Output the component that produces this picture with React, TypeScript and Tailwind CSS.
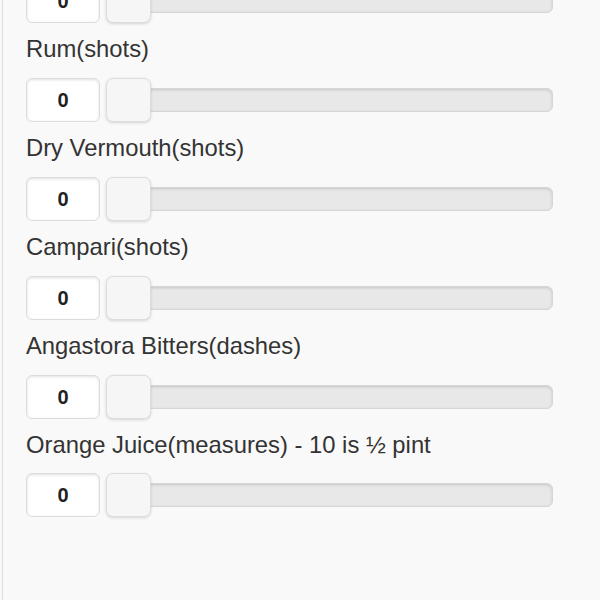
const rows = [
  { label: null },
  { label: 'Rum(shots)' },
  { label: 'Dry Vermouth(shots)' },
  { label: 'Campari(shots)' },
  { label: 'Angastora Bitters(dashes)' },
  { label: 'Orange Juice(measures) - 10 is ½ pint' },
]

function SliderRow() {
  return (
    <div className="flex items-center h-[44px]">
      <div className="w-[74px] h-[44px] rounded-[6px] border border-[#dcdcdc] bg-white shadow-[inset_0_1px_3px_rgba(0,0,0,0.12)] flex items-center justify-center text-[20px] font-bold text-[#222]">
        0
      </div>
      <div className="relative flex-1 h-[44px] ml-[6px] mr-[47px]">
        <div className="ml-[22px] mt-[10px] h-[24px] rounded-[6px] border border-[#d6d6d6] bg-[#e8e8e8] shadow-[inset_0_1px_3px_rgba(0,0,0,0.15)]" />
        <div className="absolute left-0 top-0 w-[45px] h-[44px] rounded-[7px] border border-[#dddddd] bg-[#f6f6f6] shadow-[0_1px_3px_rgba(0,0,0,0.15)]" />
      </div>
    </div>
  )
}

export default function App() {
  return (
    <div className="w-[600px] h-[600px] overflow-hidden bg-[#f9f9f9] pl-[2px] font-['Liberation_Sans',Arial,sans-serif] text-[#333]">
      <div className="h-[640px] border-l border-[#dddddd] pl-[23px] -mt-[21px]">
        {rows.map((r, i) => (
          <div key={i}>
            {r.label && (
              <div className="mt-[9px] mb-[12.9px] text-[23.8px] leading-[33px] whitespace-nowrap">
                {r.label}
              </div>
            )}
            <SliderRow />
          </div>
        ))}
      </div>
    </div>
  )
}
